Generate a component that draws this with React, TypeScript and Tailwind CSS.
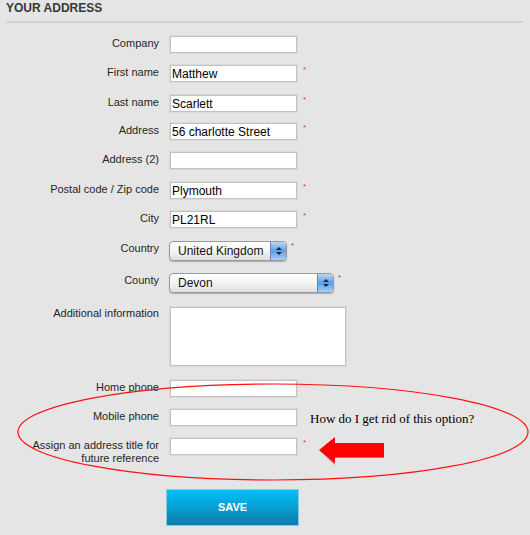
import React from 'react';

type FieldProps = {
  label: React.ReactNode;
  value?: string;
  required?: boolean;
  className?: string;
};

function Star({ className = 'ml-[5px]' }: { className?: string }) {
  return <span className={`${className} mt-[1px] text-[8px] leading-[8px] text-[#d9363e]`}>*</span>;
}

function TextRow({ label, value = '', required, className = '' }: FieldProps) {
  return (
    <div className={`flex items-start ${className}`}>
      <label className="w-[159px] pt-[1px] text-right text-[11px] leading-[13px] text-[#262626]">{label}</label>
      <input
        readOnly
        value={value}
        className="ml-[11px] box-border h-[17px] w-[127px] border border-[#c2c2c2] bg-white px-[1px] text-[12px] leading-[15px] text-black shadow-[0_0_0_1px_#dadada] outline-none"
      />
      {required && <Star className="ml-[6px]" />}
    </div>
  );
}

function SelectRow({ label, value, width, className = '' }: FieldProps & { width: string }) {
  return (
    <div className={`flex items-start ${className}`}>
      <label className="w-[159px] pt-[1px] text-right text-[11px] leading-[13px] text-[#262626]">{label}</label>
      <div
        className={`ml-[10px] flex h-[20px] ${width} overflow-hidden rounded-[4px] border border-[#9a9a9a] bg-gradient-to-b from-white via-[#f4f4f4] to-[#dedede] shadow-[0_1px_1px_rgba(0,0,0,0.25)]`}
      >
        <span className="flex-1 pl-[8px] text-[12px] leading-[18px] text-[#111]">{value}</span>
        <span className="flex w-[16px] flex-col items-center justify-center gap-[2px] border-l border-[#5b86c4] bg-gradient-to-b from-[#bcd9f8] via-[#5d9de6] to-[#a6cff7]">
          <svg width="6" height="3" viewBox="0 0 6 3">
            <path d="M0 3 L3 0 L6 3 Z" fill="#1d2a3a" />
          </svg>
          <svg width="6" height="3" viewBox="0 0 6 3">
            <path d="M0 0 L3 3 L6 0 Z" fill="#1d2a3a" />
          </svg>
        </span>
      </div>
      <Star className="ml-[4px]" />
    </div>
  );
}

export default function App() {
  return (
    <div className="relative h-[535px] w-[530px] overflow-hidden bg-[#e5e5e5] font-['Liberation_Sans',Arial,sans-serif]">
      <h2 className="pl-[6px] pt-[1px] text-[12px] font-bold leading-[14px] text-[#383838]">YOUR ADDRESS</h2>
      <div className="ml-[6px] mt-[6px] h-[2px] w-[517px] bg-[#d2d2d2]" />

      <div className="mt-[13px] flex flex-col">
        <TextRow label="Company" />
        <TextRow label="First name" value="Matthew" required className="mt-[12px]" />
        <TextRow label="Last name" value="Scarlett" required className="mt-[13px]" />
        <TextRow label="Address" value="56 charlotte Street" required className="mt-[11px]" />
        <TextRow label="Address (2)" className="mt-[12px]" />
        <TextRow label="Postal code / Zip code" value="Plymouth" required className="mt-[13px]" />
        <TextRow label="City" value="PL21RL" required className="mt-[12px]" />
        <SelectRow label="Country" value="United Kingdom" width="w-[118px]" className="mt-[13px]" />
        <SelectRow label="County" value="Devon" width="w-[165px]" className="mt-[12px]" />

        <div className="mt-[14px] flex items-start">
          <label className="w-[159px] text-right text-[11px] leading-[13px] text-[#262626]">
            Additional information
          </label>
          <textarea
            readOnly
            className="ml-[11px] box-border h-[59px] w-[176px] resize-none border border-[#c2c2c2] bg-white shadow-[0_0_0_1px_#dadada] outline-none"
          />
        </div>

        <TextRow label="Home phone" className="mt-[14px]" />
        <TextRow label="Mobile phone" className="mt-[12px]" />
        <TextRow
          label={
            <>
              Assign an address title for
              <br />
              future reference
            </>
          }
          required
          className="mt-[12px]"
        />

        <button className="ml-[166px] mt-[24px] h-[37px] w-[133px] border border-[#7fcbe9] bg-gradient-to-b from-[#00c1fb] to-[#0b7daa] text-[11px] font-bold text-white">
          SAVE
        </button>
      </div>

      {/* annotation drawn over the form */}
      <svg className="pointer-events-none absolute left-0 top-0" width="530" height="535" viewBox="0 0 530 535">
        <ellipse cx="273" cy="432" rx="255" ry="48" fill="none" stroke="#ff1010" strokeWidth="1.2" />
        <polygon points="320,451 335,438 335,444 384,444 384,458 335,458 335,465" fill="#a00000" opacity="0.5" />
        <polygon points="319,450 335,437 335,443 384,443 384,457 335,457 335,463" fill="#ff0000" />
      </svg>
      <div className="absolute left-[310px] top-[411px] font-['Liberation_Serif','Times_New_Roman',serif] text-[13px] leading-[16px] text-black">
        How do I get rid of this option?
      </div>
    </div>
  );
}
